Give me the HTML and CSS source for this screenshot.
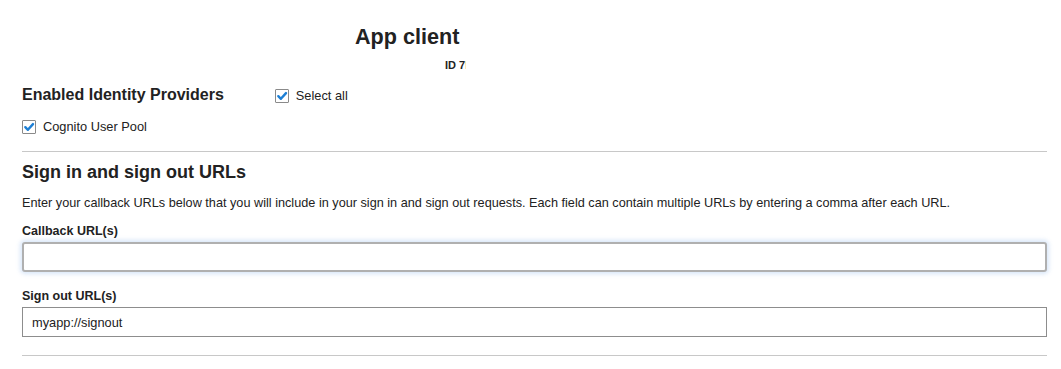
FILE: index.html
```html
<!DOCTYPE html>
<html lang="en">
<head>
    <meta charset="UTF-8">
    <title>App client</title>
    <link rel="stylesheet" href="styles.css">
</head>
<body>
    <main class="page">
        <div class="client-head">
            <h1 class="client-title">App client</h1>
            <div class="client-id">ID 7h2k4q9dse1mvb0r8t5n3l6gca</div>
        </div>

        <section class="providers">
            <div class="providers__top">
                <h2 class="section-title">Enabled Identity Providers</h2>
                <label class="check">
                    <span class="check__box">
                        <svg viewBox="0 0 12 12" width="12" height="12"><path d="M2.3 6.2 L4.9 8.8 L10 3.1" fill="none" stroke="#1d7fd5" stroke-width="2.4" stroke-linecap="round" stroke-linejoin="round"/></svg>
                    </span>
                    Select all
                </label>
            </div>
            <label class="check">
                <span class="check__box">
                    <svg viewBox="0 0 12 12" width="12" height="12"><path d="M2.3 6.2 L4.9 8.8 L10 3.1" fill="none" stroke="#1d7fd5" stroke-width="2.4" stroke-linecap="round" stroke-linejoin="round"/></svg>
                </span>
                Cognito User Pool
            </label>
        </section>

        <section class="urls">
            <h2 class="section-title section-title--large">Sign in and sign out URLs</h2>
            <p class="hint">Enter your callback URLs below that you will include in your sign in and sign out requests. Each field can contain multiple URLs by entering a comma after each URL.</p>

            <label class="field-label" for="callback">Callback URL(s)</label>
            <input class="field field--focus" id="callback" type="text" value="">

            <label class="field-label" for="signout">Sign out URL(s)</label>
            <input class="field" id="signout" type="text" value="myapp://signout">
        </section>
    </main>
</body>
</html>
```

FILE: styles.css
```css
body {
  margin: 0;
  font-family: "Liberation Sans", Arial, sans-serif;
  color: #222;
  background: #fff;
}

.page {
  width: 1025px;
  padding: 0 14px 0 22px;
}

.client-head {
  width: 444px;
  overflow: hidden;
  white-space: nowrap;
}

.client-title {
  margin: 0;
  padding: 24px 0 0 333px;
  font-size: 21.6px;
  line-height: 26px;
  font-weight: bold;
  color: #222;
}

.client-id {
  padding: 9px 0 0 423px;
  font-size: 11px;
  line-height: 12px;
  font-weight: bold;
}

.section-title {
  margin: 0;
  font-size: 16px;
  line-height: 18px;
  font-weight: bold;
  color: #222;
}

.section-title--large {
  font-size: 18px;
  line-height: 20px;
}

.providers {
  padding: 15px 0 17px;
  border-bottom: 1px solid #c8c8c8;
}

.providers__top {
  display: flex;
  align-items: center;
  margin-bottom: 16px;
}

.providers__top .check {
  margin-left: 51px;
  margin-top: 2px;
}

.check {
  display: flex;
  align-items: center;
  gap: 7px;
  font-size: 12.8px;
  line-height: 14px;
  color: #222;
}

.check__box {
  display: flex;
  width: 12px;
  height: 12px;
  border: 1px solid #8a8a8a;
  background: #fff;
  border-radius: 1px;
  overflow: hidden;
  align-items: center;
  justify-content: center;
}

.urls {
  padding: 10px 0 18px;
  border-bottom: 1px solid #c8c8c8;
}

.hint {
  margin: 14px 0 0;
  font-size: 12.7px;
  line-height: 14px;
  color: #222;
}

.field-label {
  display: block;
  margin-top: 14px;
  font-size: 12.5px;
  line-height: 14px;
  font-weight: bold;
}

.field {
  display: block;
  box-sizing: border-box;
  width: 100%;
  height: 30px;
  margin-top: 4px;
  padding: 0 9px;
  font-family: "Liberation Sans", Arial, sans-serif;
  font-size: 12.8px;
  color: #222;
  border: 1px solid #8d8d8d;
  border-radius: 0;
  outline: none;
  background: #fff;
}

.field--focus {
  border: 2px solid #b0b0b0;
  border-radius: 3px;
  box-shadow: 0 0 4px 2px rgba(120, 170, 235, 0.28);
}

.field--focus + .field-label {
  margin-top: 17px;
}
```
